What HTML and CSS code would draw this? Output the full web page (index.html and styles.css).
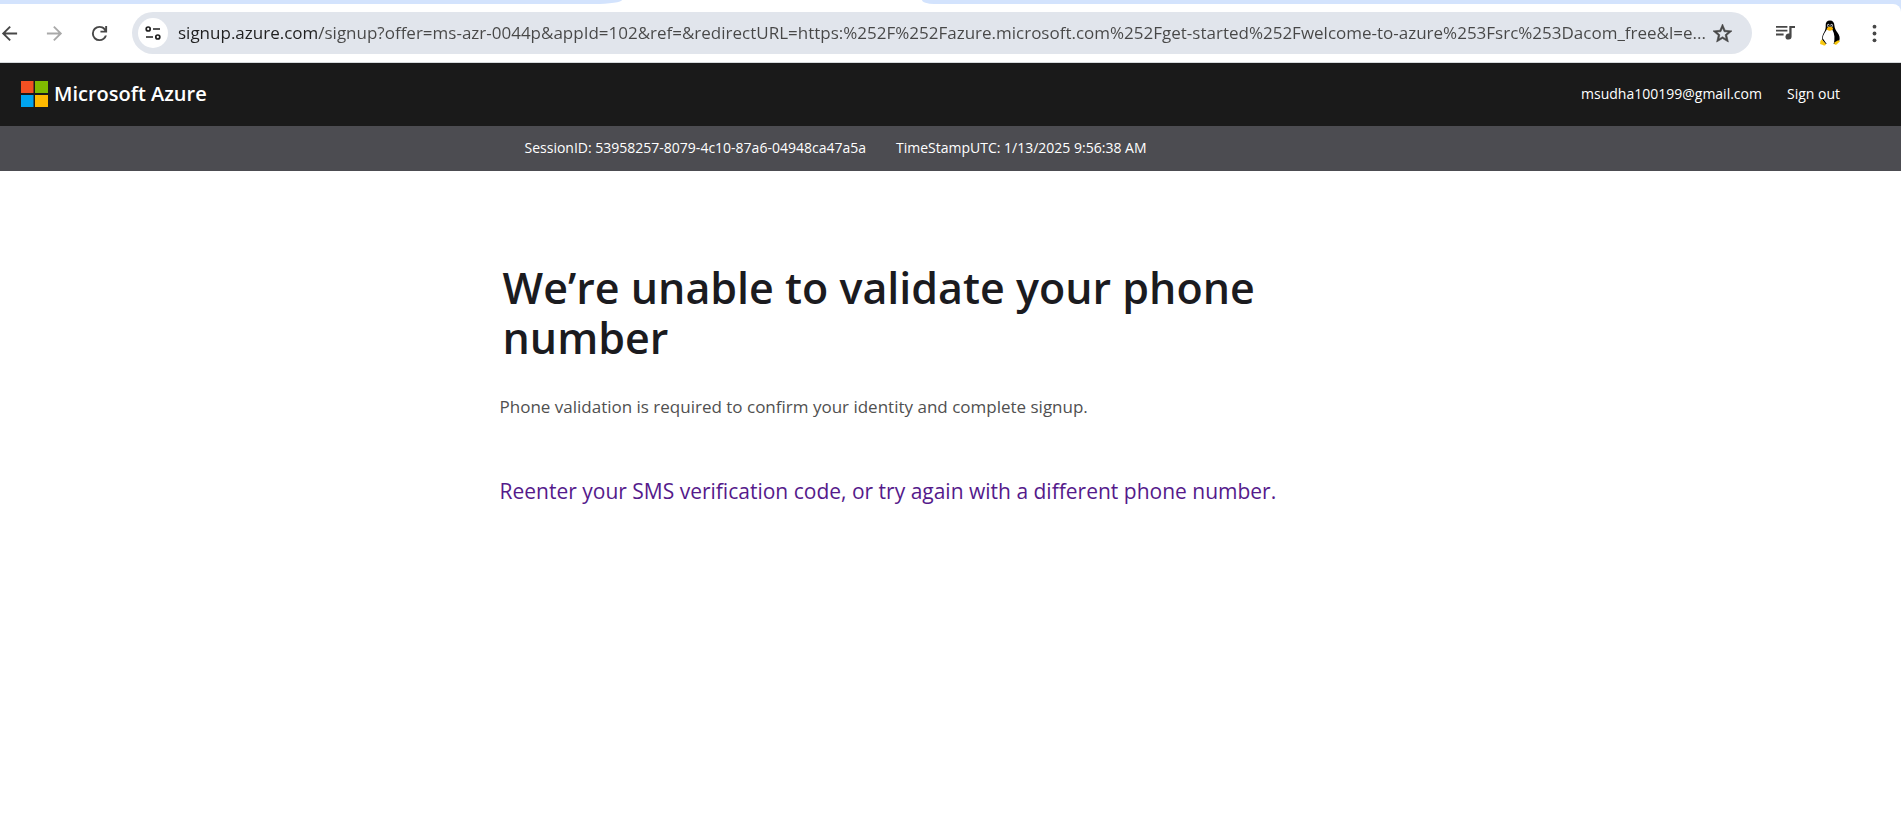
FILE: index.html
```
<!DOCTYPE html>
<html lang="en">
<head>
    <meta charset="UTF-8">
    <meta name="viewport" content="width=device-width, initial-scale=1.0">
    <title>Microsoft Azure</title>
    <link rel="stylesheet" href="styles.css">
</head>
<body>
    <div class="browser">
        <div class="tab-strip">
            <div class="tabs-left"></div>
            <div class="tabs-right"></div>
        </div>
        <div class="toolbar">
            <div class="nav-buttons">
                <button class="icon-btn" aria-label="Back">
                    <svg viewBox="2 2 20 20"><path d="M20 11H7.83l5.59-5.59L12 4l-8 8 8 8 1.41-1.41L7.83 13H20z"/></svg>
                </button>
                <button class="icon-btn inactive" aria-label="Forward">
                    <svg viewBox="2 2 20 20"><path d="M12 4l-1.41 1.41L16.17 11H4v2h12.17l-5.58 5.59L12 20l8-8z"/></svg>
                </button>
                <button class="icon-btn" aria-label="Reload">
                    <svg viewBox="2 2 20 20"><path d="M12 20q-3.35 0-5.675-2.325T4 12t2.325-5.675T12 4q1.725 0 3.3.712T18 6.75V4h2v7h-7V9h4.2q-.8-1.4-2.188-2.2T12 6Q9.500 6 7.750 7.750T6 12t1.750 4.250T12 18q1.925 0 3.475-1.100T17.650 14h2.100q-.7 2.650-2.850 4.325T12 20z"/></svg>
                </button>
            </div>
            <div class="address-bar">
                <button class="site-info" aria-label="View site information">
                    <svg viewBox="0 0 16 16" fill="none" stroke="currentColor" stroke-width="1.700"><circle cx="3.200" cy="4" r="2"/><path d="M8 4h7M1 12h7"/><circle cx="12.800" cy="12" r="2"/></svg>
                </button>
                <input class="url" type="text" aria-label="Address and search bar" value="signup.azure.com/signup?offer=ms-azr-0044p&amp;appId=102&amp;ref=&amp;redirectURL=https:%252F%252Fazure.microsoft.com%252Fget-started%252Fwelcome-to-azure%253Fsrc%253Dacom_free&amp;l=e...">
                <button class="icon-btn star" aria-label="Bookmark this tab">
                    <svg viewBox="2 2 20 20"><path d="M22 9.240l-7.190-.620L12 2 9.190 8.630 2 9.240l5.460 4.730L5.820 21 12 17.270 18.180 21l-1.630-7.030L22 9.240zM12 15.400l-3.760 2.270 1-4.280-3.320-2.880 4.380-.380L12 6.100l1.710 4.040 4.380.380-3.320 2.880 1 4.280L12 15.400z"/></svg>
                </button>
            </div>
            <div class="tool-buttons">
                <button class="icon-btn" aria-label="Media controls">
                    <svg viewBox="2 2 20 20"><path d="M2 4h12v2H2zM2 8h12v2H2zM2 12h8v2H2zM16 4h6v2.200h-3.600V15.200a3.200 3.200 0 1 1-2.400-3.100z"/></svg>
                </button>
                <button class="profile" aria-label="Profile">
                    <svg viewBox="0 0 21 26">
                        <path fill="#000" d="M10.500 0.500C7.600 0.500 6.100 2.300 6.200 5c.1 3-.2 4.700-1.600 7.200C3.200 14.600 2.200 17 2.800 20l3 4h9l4.800-3c1.200-2.600.4-5.600-1.500-8.200-1.800-2.500-3-4.300-3.200-7.300-.1-3-1.500-5-4.400-5z"/>
                        <path fill="#fff" d="M7.400 9.300C6 12 3.600 14.600 3.200 18.200l4 5.700c2.400 1.700 5 1.500 7-.2 1.300-4.800 1.200-9.700-1.400-14.300z"/>
                        <ellipse cx="8.800" cy="5.500" rx="1.200" ry="1.700" fill="#bbb"/>
                        <ellipse cx="12.100" cy="5.500" rx="1.300" ry="1.700" fill="#bbb"/>
                        <circle cx="9.100" cy="5.800" r=".7"/>
                        <circle cx="11.800" cy="5.800" r=".7"/>
                        <path fill="#f8b400" d="M7.400 8.200c1.500-1.700 4.200-1.800 6.200-.2l-.4 1.500c-2 1.600-4 1.700-5.400.3z"/>
                        <path fill="#f9c80e" d="M2.200 19.400l4.300 4.500c-.6 1.700-1.600 1.900-3 1L.6 24l.3-3zM14.700 22.500l4-2.200 1.800.9-3.400 3.200c-1.300.8-2.300.4-2.400-1.900z"/>
                    </svg>
                </button>
                <button class="icon-btn" aria-label="Menu">
                    <svg viewBox="2 2 20 20"><circle cx="12" cy="4.800" r="2"/><circle cx="12" cy="12" r="2"/><circle cx="12" cy="19.200" r="2"/></svg>
                </button>
            </div>
        </div>
    </div>

    <header class="header">
        <a class="brand" href="#">
            <svg class="logo" viewBox="0 0 27 26"><path fill="#f25022" d="M0 0h12.500v12H0z"/><path fill="#7fba00" d="M14 0h13v12H14z"/><path fill="#00a4ef" d="M0 14h12.500v12H0z"/><path fill="#ffb900" d="M14 14h13v12H14z"/></svg>
            <span>Microsoft Azure</span>
        </a>
        <nav class="account">
            <span>msudha100199@gmail.com</span>
            <a href="#">Sign out</a>
        </nav>
    </header>

    <div class="session-bar">
        <span>SessionID: 53958257-8079-4c10-87a6-04948ca47a5a</span>
        <span>TimeStampUTC: 1/13/2025 9:56:38 AM</span>
    </div>

    <main class="content">
        <h1>We’re unable to validate your phone number</h1>
        <p class="message">Phone validation is required to confirm your identity and complete signup.</p>
        <a class="retry" href="#">Reenter your SMS verification code, or try again with a different phone number.</a>
    </main>
</body>
</html>
```
FILE: styles.css
```
* {
    box-sizing: border-box;
}

body {
    margin: 0;
    background-color: #fff;
    color: #1b1b1f;
    font-family: "Segoe UI", "Open Sans", sans-serif;
}

button {
    padding: 0;
    border: none;
    background: none;
    cursor: pointer;
}

svg {
    display: block;
}

/* Browser bar */
.browser {
    background-color: #d3e3fd;
    border-bottom: 1px solid #d5d9dc;
}

.tab-strip {
    display: flex;
    gap: 300px;
    height: 4px;
    background-color: #fff;
}

.tabs-left {
    width: 622px;
    background-color: #d3e3fd;
    border-bottom-right-radius: 28px 4px;
}

.tabs-right {
    flex: 1;
    background-color: #d3e3fd;
    border-bottom-left-radius: 12px 4px;
}

.toolbar {
    display: flex;
    align-items: center;
    height: 58px;
    padding-right: 17px;
    border-top-right-radius: 8px;
    background-color: #fff;
}

.nav-buttons {
    display: flex;
    gap: 26px;
    margin-right: 23px;
}

.icon-btn {
    color: #474747;
}

.icon-btn svg {
    width: 19px;
    height: 19px;
    fill: currentColor;
}

.icon-btn.inactive {
    color: #a9a9a9;
}

.icon-btn.star svg {
    stroke: currentColor;
    stroke-width: 0.6;
}

.address-bar {
    flex: 1;
    display: flex;
    align-items: center;
    height: 42px;
    padding: 0 20px 0 6px;
    border-radius: 21px;
    background-color: #e1e5ec;
}

.site-info {
    display: flex;
    align-items: center;
    justify-content: center;
    width: 30px;
    height: 30px;
    border-radius: 50%;
    background-color: #fff;
    color: #1f1f1f;
}

.site-info svg {
    width: 16px;
    height: 16px;
}

/* The host is darker than the rest of the address */
.url {
    flex: 1;
    min-width: 0;
    margin: 0 6px 0 10px;
    padding: 0;
    border: none;
    outline: none;
    background: linear-gradient(to right, #1f1f1f 140px, #474747 140px);
    background-clip: text;
    -webkit-background-clip: text;
    color: transparent;
    font-family: inherit;
    font-size: 17px;
    line-height: 28px;
}

.tool-buttons {
    display: flex;
    align-items: center;
    gap: 24px;
    margin-left: 24px;
}

.profile svg {
    width: 22px;
    height: 26px;
}

/* Azure header */
.header {
    display: flex;
    align-items: center;
    justify-content: space-between;
    height: 63px;
    padding: 0 61px 2px 21px;
    background-color: #1a1a1a;
    color: #fff;
}

.brand {
    display: flex;
    align-items: center;
    gap: 6px;
    color: #fff;
    font-size: 20px;
    font-weight: 600;
    text-decoration: none;
}

.logo {
    width: 27px;
    height: 26px;
}

.account {
    display: flex;
    gap: 25px;
    font-size: 14px;
}

.account a {
    color: #fff;
    text-decoration: none;
}

.session-bar {
    display: flex;
    align-items: center;
    justify-content: center;
    gap: 30px;
    height: 45px;
    padding: 0 230px 2px 0;
    background-color: #4c4c51;
    color: #fff;
    font-size: 14px;
}

.content {
    width: 902px;
    margin: 0 auto;
    padding: 92px 0 0;
}

h1 {
    max-width: 800px;
    margin: 0;
    padding-left: 3px;
    font-size: 43px;
    font-weight: 600;
    line-height: 50px;
}

.message {
    margin: 30px 0 0;
    color: #505050;
    font-size: 17px;
    line-height: 28px;
}

.retry {
    display: inline-block;
    margin-top: 54px;
    color: #551a8b;
    font-size: 21px;
    line-height: 32px;
    text-decoration: none;
}
```
